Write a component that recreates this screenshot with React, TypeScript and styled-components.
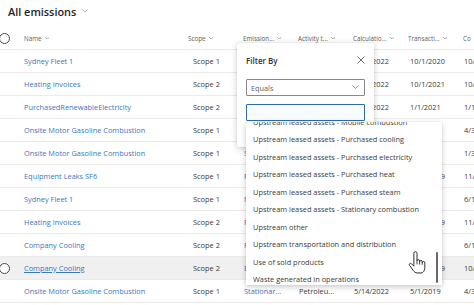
import React from "react";
import styled, { createGlobalStyle } from "styled-components";

const GlobalStyle = createGlobalStyle`
  html, body { margin: 0; padding: 0; background: #ffffff; overflow: hidden; }
  body { font-family: "Open Sans", "Noto Sans", sans-serif; color: #323130; }
  * { box-sizing: border-box; }
`;

const Page = styled.div`
  position: relative;
  width: 474px;
  height: 305px;
  overflow: hidden;
  background: #fff;
`;

const TitleBar = styled.div`
  height: 27px;
  display: flex;
  align-items: center;
  gap: 6px;
  padding: 0 0 5px 8px;
`;

const Title = styled.h1`
  margin: 0;
  font-size: 10.9px;
  font-weight: 600;
  color: #252423;
`;

const Table = styled.div`
  display: grid;
  grid-template-columns: 24px 164px 55px 55px 55px 55px 55px 55px;
  width: 518px;
`;

const HeaderCell = styled.div`
  height: 23px;
  display: flex;
  align-items: center;
  gap: 3px;
  font-size: 6.3px;
  color: #605e5c;
  border-bottom: 1px solid #edebe9;
  white-space: nowrap;
`;

const Cell = styled.div<{ $hover?: boolean; $indent?: number }>`
  height: 23px;
  display: flex;
  align-items: center;
  padding-left: ${(p) => p.$indent ?? 1}px;
  font-size: 7.4px;
  color: #3b3a39;
  border-bottom: 1px solid #edebe9;
  background: ${(p) => (p.$hover ? "#f0f0f0" : "transparent")};
  white-space: nowrap;
  overflow: hidden;
`;

const LinkText = styled.span<{ $underline?: boolean }>`
  color: #3a78ba;
  text-decoration: ${(p) => (p.$underline ? "underline" : "none")};
`;

const Radio = styled.span`
  display: inline-block;
  width: 11px;
  height: 11px;
  border-radius: 50%;
  border: 1px solid #4a4846;
  margin-left: -1px;
  background: #fff;
`;

const FilterPanel = styled.div`
  position: absolute;
  left: 237px;
  top: 43px;
  width: 137px;
  height: 104px;
  background: #fff;
  border-radius: 2px;
  box-shadow: 0 1.5px 6px rgba(0, 0, 0, 0.2), 0 0 1px rgba(0, 0, 0, 0.15);
  padding: 9px 9px 0 9px;
  display: flex;
  flex-direction: column;
`;

const PanelHead = styled.div`
  display: flex;
  align-items: center;
  justify-content: space-between;
  height: 16px;
`;

const PanelTitle = styled.div`
  font-size: 8px;
  font-weight: 600;
  color: #323130;
`;

const CloseBtn = styled.span`
  display: flex;
`;

const SelectBox = styled.div`
  margin-top: 11px;
  height: 17px;
  width: 119px;
  border: 1px solid #8a8886;
  border-radius: 1px;
  display: flex;
  align-items: center;
  justify-content: space-between;
  padding: 0 5px 0 4px;
  font-size: 7.3px;
  color: #605e5c;
`;

const InputBox = styled.div`
  margin-top: 8px;
  height: 17px;
  width: 119px;
  border: 1.5px solid #2e6ba9;
  border-radius: 1px;
  background: #f8fbfe;
`;

const ListBox = styled.div`
  position: absolute;
  left: 246px;
  top: 122px;
  width: 196px;
  height: 163px;
  background: #fff;
  box-shadow: 0 1.5px 6px rgba(0, 0, 0, 0.2), 0 0 1px rgba(0, 0, 0, 0.15);
  overflow: hidden;
`;

const ListScroll = styled.div<{ $offset: number }>`
  transform: translateY(${(p) => -p.$offset}px);
  display: flex;
  flex-direction: column;
`;

const ListItem = styled.div`
  height: 17.5px;
  display: flex;
  align-items: center;
  padding-left: 7px;
  font-size: 7.4px;
  color: #3b3a39;
  white-space: nowrap;
`;

const ScrollThumb = styled.div`
  position: absolute;
  right: 4px;
  bottom: 2px;
  width: 2.5px;
  height: 31px;
  border-radius: 1px;
  background: #6b6967;
`;

const Cursor = styled.svg`
  position: absolute;
  left: 407px;
  top: 251px;
`;

const Chevron = ({ size = 5, color = "#605e5c" }: { size?: number; color?: string }) => (
  <svg width={size} height={size * 0.6} viewBox="0 0 10 6" fill="none">
    <path d="M1 1l4 4 4-4" stroke={color} strokeWidth="1.3" strokeLinecap="round" strokeLinejoin="round" />
  </svg>
);

type Row = {
  name: string;
  scope: string;
  emission: string;
  activity: string;
  calc: string;
  trans: string;
  co: string;
  hover?: boolean;
};

const rows: Row[] = [
  { name: "Sydney Fleet 1", scope: "Scope 1", emission: "Mobile co...", activity: "Fuel", calc: "5/14/2022", trans: "10/1/2020", co: "10/1/2020" },
  { name: "Heating Invoices", scope: "Scope 2", emission: "Purchase...", activity: "Heat", calc: "5/14/2022", trans: "10/1/2021", co: "10/1/2021" },
  { name: "PurchasedRenewableElectricity", scope: "Scope 2", emission: "Purchase...", activity: "Electricity", calc: "5/14/2022", trans: "1/1/2021", co: "1/1/2021" },
  { name: "Onsite Motor Gasoline Combustion", scope: "Scope 1", emission: "Stationar...", activity: "Petroleu...", calc: "5/14/2022", trans: "4/1/2019", co: "4/3/2019" },
  { name: "Onsite Motor Gasoline Combustion", scope: "Scope 1", emission: "Stationar...", activity: "Petroleu...", calc: "5/14/2022", trans: "1/1/2019", co: "1/3/2019" },
  { name: "Equipment Leaks SF6", scope: "Scope 1", emission: "Fugitive ...", activity: "Sulfur...", calc: "5/14/2022", trans: "11/1/2019", co: "11/3/2019" },
  { name: "Sydney Fleet 1", scope: "Scope 1", emission: "Mobile co...", activity: "Fuel", calc: "5/14/2022", trans: "6/1/2019", co: "6/1/2019" },
  { name: "Heating Invoices", scope: "Scope 2", emission: "Purchase...", activity: "Heat", calc: "5/14/2022", trans: "11/1/2019", co: "11/1/2019" },
  { name: "Company Cooling", scope: "Scope 2", emission: "Purchase...", activity: "Cooling", calc: "5/14/2022", trans: "6/1/2019", co: "6/1/2019" },
  { name: "Company Cooling", scope: "Scope 2", emission: "Electricity", activity: "Cooling", calc: "5/14/2022", trans: "10/1/2019", co: "10/1/2019", hover: true },
  { name: "Onsite Motor Gasoline Combustion", scope: "Scope 1", emission: "Stationar...", activity: "Petroleu...", calc: "5/14/2022", trans: "5/1/2019", co: "4/3/2019" },
];

const headers = ["Name", "Scope", "Emission...", "Activity t...", "Calculatio...", "Transacti...", "Co"];

const options = [
  "Upstream leased assets - Mobile combustion",
  "Upstream leased assets - Purchased cooling",
  "Upstream leased assets - Purchased electricity",
  "Upstream leased assets - Purchased heat",
  "Upstream leased assets - Purchased steam",
  "Upstream leased assets - Stationary combustion",
  "Upstream other",
  "Upstream transportation and distribution",
  "Use of sold products",
  "Waste generated in operations",
];

export default function App() {
  return (
    <Page>
      <GlobalStyle />
      <TitleBar>
        <Title>All emissions</Title>
        <Chevron size={6} color="#a19f9d" />
      </TitleBar>
      <Table>
        <HeaderCell>
          <Radio />
        </HeaderCell>
        {headers.map((h, i) => (
          <HeaderCell key={h}>
            {h}
            {i < headers.length - 1 && <Chevron size={4.5} />}
          </HeaderCell>
        ))}
        {rows.map((r, i) => (
          <React.Fragment key={i}>
            <Cell $hover={r.hover} $indent={0}>{r.hover && <Radio />}</Cell>
            <Cell $hover={r.hover} $indent={0}>
              <LinkText $underline={r.hover}>{r.name}</LinkText>
            </Cell>
            <Cell $hover={r.hover} $indent={5}>{r.scope}</Cell>
            <Cell $hover={r.hover}>
              <LinkText>{r.emission}</LinkText>
            </Cell>
            <Cell $hover={r.hover}>{r.activity}</Cell>
            <Cell $hover={r.hover}>{r.calc}</Cell>
            <Cell $hover={r.hover} $indent={2}>{r.trans}</Cell>
            <Cell $hover={r.hover}>{r.co}</Cell>
          </React.Fragment>
        ))}
      </Table>

      <FilterPanel>
        <PanelHead>
          <PanelTitle>Filter By</PanelTitle>
          <CloseBtn>
            <svg width="8" height="8" viewBox="0 0 8 8">
              <path d="M0.5 0.5l7 7M7.5 0.5l-7 7" stroke="#605e5c" strokeWidth="0.9" />
            </svg>
          </CloseBtn>
        </PanelHead>
        <SelectBox>
          Equals
          <Chevron size={7} color="#8a8886" />
        </SelectBox>
        <InputBox />
      </FilterPanel>

      <ListBox>
        <ListScroll $offset={8.75}>
          {options.map((o) => (
            <ListItem key={o}>{o}</ListItem>
          ))}
        </ListScroll>
        <ScrollThumb />
      </ListBox>

      <Cursor width="20" height="23" viewBox="0 0 17 22">
        <path
          d="M5.5 13 V2.2 A1.5 1.5 0 0 1 8.5 2.2 V9.5 A1.25 1.25 0 0 1 11 9.5 V10.3 A1.25 1.25 0 0 1 13.5 10.3 V11.3 A1.25 1.25 0 0 1 16 11.3 V16 C16 18.5 14.5 21 12.5 21 H8.5 C7 21 6 20 5 18.8 L1.3 13.6 A1.2 1.2 0 0 1 3 12 L5.5 14.5 Z"
          fill="#fff"
          stroke="#222"
          strokeWidth="0.9"
          strokeLinejoin="round"
        />
        <path d="M8.5 9.5V12.8M11 10.3V13M13.5 11.3V13.2" stroke="#222" strokeWidth="0.8" />
      </Cursor>
    </Page>
  );
}
